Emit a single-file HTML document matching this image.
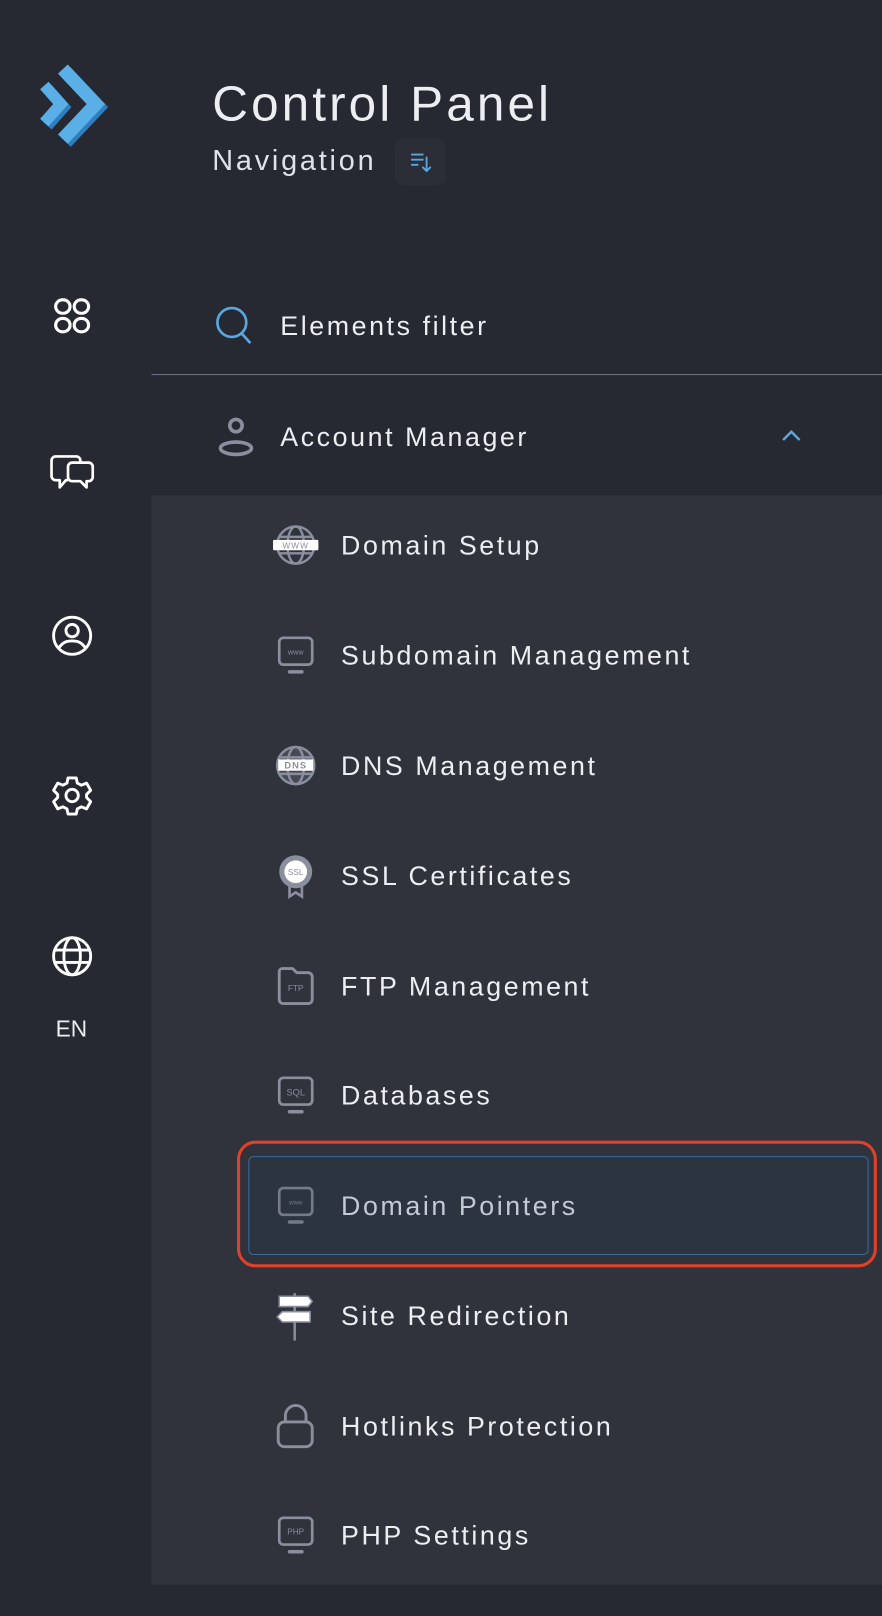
<!DOCTYPE html>
<html><head><meta charset="utf-8"><style>
html,body{margin:0;padding:0;background:#262932;width:882px;height:1616px;overflow:hidden}
#w{position:absolute;left:0;top:0;width:856px;height:1568px;transform:scale(1.0304);transform-origin:0 0;font-family:"Liberation Sans",sans-serif;color:#eceef2}
.abs{position:absolute}
.side{left:0;top:0;width:147px;height:1568px;background:#262932}
.sub{left:147px;top:481px;width:709px;height:1057px;background:#30333c}
.item{position:absolute;left:331px;font-size:26px;letter-spacing:2.5px;line-height:30px;transform:translateY(-15px);white-space:nowrap}
.ic{position:absolute;left:265px;width:44px;height:44px;transform:translateY(-22px)}
svg{overflow:visible}
</style></head><body><div id="w">
<div class="abs side"></div>
<div class="abs sub"></div>
<!-- logo -->
<svg class="abs" style="left:0;top:0" width="140" height="160" viewBox="0 0 140 160" fill="none" stroke-linejoin="miter" stroke-miterlimit="10">
<polyline points="46,86 62,104 46,122" stroke="#2f7fc0" stroke-width="11"/>
<polyline points="43,83 59,101 43,119" stroke="#5ab0e6" stroke-width="11"/>
<polyline points="64,70 96,104 64,138" stroke="#2f7fc0" stroke-width="13"/>
<polyline points="61,67 93,101 61,135" stroke="#5ab0e6" stroke-width="13"/>
</svg>
<div class="abs" style="left:206px;top:74px;font-size:48px;letter-spacing:3px;white-space:nowrap">Control Panel</div>
<div class="abs" style="left:206px;top:140px;font-size:28px;letter-spacing:2.7px;color:#dfe2e8">Navigation</div>
<div class="abs" style="left:383px;top:135px;width:50px;height:45px;border-radius:8px;background:#2b2e37"></div>
<svg class="abs" style="left:398px;top:148px" width="22" height="20" viewBox="0 0 22 20" fill="none" stroke="#5aa7e0" stroke-width="1.8"><path d="M1 2h12M1 7h12M1 12h7M16 4v14M12 14l4 4 4-4"/></svg>
<!-- sidebar icons -->
<svg class="abs" style="left:52px;top:289px" width="36" height="36" viewBox="0 0 36 36" fill="none" stroke="#fff" stroke-width="3"><rect x="2" y="2" width="14" height="13" rx="6.5"/><rect x="20" y="2" width="14" height="13" rx="6.5"/><rect x="2" y="20" width="14" height="13" rx="6.5"/><rect x="20" y="20" width="14" height="13" rx="6.5"/></svg>
<svg class="abs" style="left:48px;top:441px" width="44" height="40" viewBox="0 0 44 40" fill="none" stroke="#fff" stroke-width="2.6" stroke-linejoin="round"><path d="M30 8V6a4 4 0 0 0-4-4H6a4 4 0 0 0-4 4v15a4 4 0 0 0 4 4h4v7l6-7h2"/><path d="M18 12a4 4 0 0 1 4-4h16a4 4 0 0 1 4 4v10a4 4 0 0 1-4 4h-2v6l-6-6h-8a4 4 0 0 1-4-4z"/></svg>
<svg class="abs" style="left:50px;top:597px" width="40" height="40" viewBox="0 0 40 40" fill="none" stroke="#fff" stroke-width="2.8"><circle cx="20" cy="20" r="18"/><circle cx="20" cy="15" r="6"/><path d="M7 32c4-6 8-7 13-7s9 1 13 7"/></svg>
<svg class="abs" style="left:50px;top:752px" width="40" height="40" viewBox="0 0 40 40" fill="none" stroke="#fff" stroke-width="2.8" stroke-linejoin="round"><path d="M16 3h8l1 5 4 2 5-2 4 7-4 4v3l4 4-4 7-5-2-4 2-1 5h-8l-1-5-4-2-5 2-4-7 4-4v-3L2 15l4-7 5 2 4-2z"/><circle cx="20" cy="20" r="6"/></svg>
<svg class="abs" style="left:50px;top:908px" width="40" height="40" viewBox="0 0 40 40" fill="none" stroke="#fff" stroke-width="2.8"><circle cx="20" cy="20" r="18"/><ellipse cx="20" cy="20" rx="8" ry="18"/><path d="M3 14h34M3 26h34"/></svg>
<div class="abs" style="left:54px;top:986px;font-size:22px;color:#eceef2">EN</div>
<!-- search -->
<svg class="abs" style="left:208px;top:297px" width="40" height="40" viewBox="0 0 40 40" fill="none" stroke="#5aa7e0" stroke-width="2.6"><circle cx="17" cy="16" r="14"/><path d="M26 26l9 10"/></svg>
<div class="abs" style="left:272px;top:301px;font-size:26px;letter-spacing:2.5px">Elements filter</div>
<div class="abs" style="left:147px;top:363px;width:709px;height:1px;background:#6c7284"></div>
<svg class="abs" style="left:211px;top:404px" width="36" height="40" viewBox="0 0 36 40" fill="none" stroke="#8a8f9e" stroke-width="3.5"><circle cx="18" cy="9" r="6"/><ellipse cx="18" cy="31" rx="15" ry="6"/></svg>
<div class="abs" style="left:272px;top:409px;font-size:26px;letter-spacing:2.5px">Account Manager</div>
<svg class="abs" style="left:758px;top:416px" width="20" height="14" viewBox="0 0 20 14" fill="none" stroke="#5aa7e0" stroke-width="2.4"><path d="M2 11l8-8 8 8"/></svg>
<!-- highlight -->
<div class="abs" style="left:230px;top:1107px;width:615px;height:117px;border:3px solid #e0412a;border-radius:18px"></div>
<div class="abs" style="left:241px;top:1122px;width:600px;height:94px;border:1.5px solid #3b6aa0;border-radius:5px;background:#2c3440"></div>
<!-- items -->
<svg class="ic" style="top:529px" viewBox="0 0 44 44" fill="none" stroke="#8a8f9e" stroke-width="2.4"><circle cx="22" cy="22" r="18"/><ellipse cx="22" cy="22" rx="8" ry="18"/><path d="M5 14h34M5 30h34"/><rect x="0" y="17" width="44" height="10" rx="1" fill="#fff" stroke="none"/><text x="22" y="25.5" font-size="8" text-anchor="middle" fill="#8a8f9e" stroke="none" font-family="Liberation Sans" letter-spacing="1">WWW</text></svg>
<div class="item" style="top:529px">Domain Setup</div>
<svg class="ic" style="top:636px" viewBox="0 0 44 44" fill="none" stroke="#8a8f9e" stroke-width="2.6"><rect x="6" y="5" width="32" height="26" rx="4"/><path d="M16 38h12" stroke-width="3.4" stroke-linecap="round"/><text x="22" y="21" font-size="7" text-anchor="middle" fill="#8a8f9e" stroke="none" font-family="Liberation Sans">www</text></svg>
<div class="item" style="top:636px">Subdomain Management</div>
<svg class="ic" style="top:743px" viewBox="0 0 44 44" fill="none" stroke="#8a8f9e" stroke-width="2.4"><circle cx="22" cy="22" r="18" fill="#8a8f9e" fill-opacity=".25"/><ellipse cx="22" cy="22" rx="8" ry="18"/><path d="M5 14h34M5 30h34"/><rect x="5" y="16" width="34" height="11" fill="#fff" stroke="none"/><text x="22" y="25" font-size="9" font-weight="bold" text-anchor="middle" fill="#8a8f9e" stroke="none" font-family="Liberation Sans" letter-spacing="1">DNS</text></svg>
<div class="item" style="top:743px">DNS Management</div>
<svg class="ic" style="top:850px" viewBox="0 0 44 44"><path d="M16 28v14l6-4 6 4V28" fill="none" stroke="#8a8f9e" stroke-width="2.6"/><circle cx="22" cy="18" r="16" fill="#8a8f9e"/><circle cx="22" cy="18" r="11" fill="#fff"/><text x="22" y="21" font-size="8" text-anchor="middle" fill="#8a8f9e" font-family="Liberation Sans">SSL</text></svg>
<div class="item" style="top:850px">SSL Certificates</div>
<svg class="ic" style="top:957px" viewBox="0 0 44 44" fill="none" stroke="#8a8f9e" stroke-width="2.8"><path d="M6 8a3 3 0 0 1 3-3h10l4 4h11a4 4 0 0 1 4 4v22a4 4 0 0 1-4 4H10a4 4 0 0 1-4-4z"/><text x="22" y="27" font-size="8" text-anchor="middle" fill="#8a8f9e" stroke="none" font-family="Liberation Sans">FTP</text></svg>
<div class="item" style="top:957px">FTP Management</div>
<svg class="ic" style="top:1063px" viewBox="0 0 44 44" fill="none" stroke="#8a8f9e" stroke-width="2.6"><rect x="6" y="5" width="32" height="26" rx="4"/><path d="M16 38h12" stroke-width="3.4" stroke-linecap="round"/><text x="22" y="22" font-size="9" text-anchor="middle" fill="#8a8f9e" stroke="none" font-family="Liberation Sans">SQL</text></svg>
<div class="item" style="top:1063px">Databases</div>
<svg class="ic" style="top:1170px" viewBox="0 0 44 44" fill="none" stroke="#747a88" stroke-width="2.6"><rect x="6" y="5" width="32" height="26" rx="4"/><path d="M16 38h12" stroke-width="3.4" stroke-linecap="round"/><text x="22" y="21" font-size="6" text-anchor="middle" fill="#747a88" stroke="none" font-family="Liberation Sans">www</text></svg>
<div class="item" style="top:1170px;color:#c5c9d1">Domain Pointers</div>
<svg class="ic" style="top:1277px" viewBox="0 0 44 44"><path d="M21 0v46" stroke="#8a8f9e" stroke-width="2.4"/><polygon points="6,3 34,3 38,8 34,13 6,13" fill="#fff" stroke="#8a8f9e" stroke-width="1.5"/><polygon points="36,18 9,18 4,23 9,28 36,28" fill="#fff" stroke="#8a8f9e" stroke-width="1.5"/></svg>
<div class="item" style="top:1277px">Site Redirection</div>
<svg class="ic" style="top:1384px" viewBox="0 0 44 44" fill="none" stroke="#8a8f9e" stroke-width="2.8"><path d="M12 18v-6a10 10 0 0 1 20 0v6"/><rect x="5" y="18" width="33" height="24" rx="6"/></svg>
<div class="item" style="top:1384px">Hotlinks Protection</div>
<svg class="ic" style="top:1490px" viewBox="0 0 44 44" fill="none" stroke="#8a8f9e" stroke-width="2.6"><rect x="6" y="5" width="32" height="26" rx="4"/><path d="M16 38h12" stroke-width="3.4" stroke-linecap="round"/><text x="22" y="21" font-size="8" text-anchor="middle" fill="#8a8f9e" stroke="none" font-family="Liberation Sans">PHP</text></svg>
<div class="item" style="top:1490px">PHP Settings</div>
</div></body></html>
